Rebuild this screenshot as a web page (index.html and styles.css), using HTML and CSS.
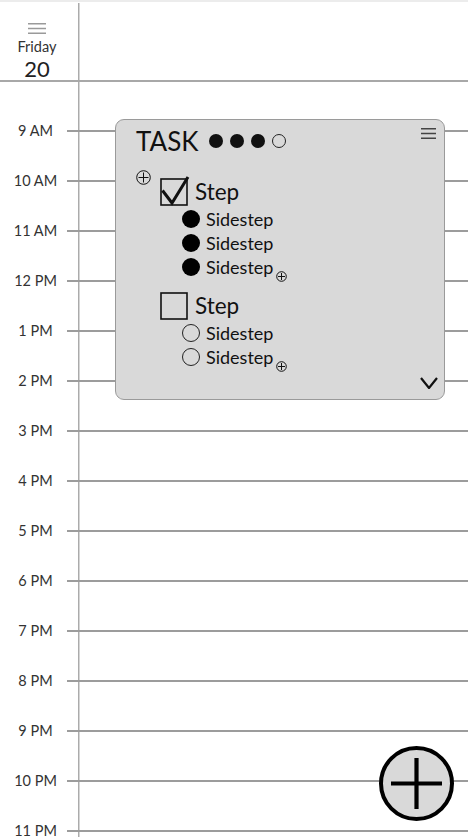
FILE: index.html
```html
<!DOCTYPE html>
<html lang="en">
<head>
<meta charset="utf-8">
<title>Day view</title>
<link rel="stylesheet" href="styles.css">
</head>
<body>
<div class="app">
  <header class="header">
    <div class="day">
      <svg class="day-menu" width="18" height="11" viewBox="0 0 18 11"><path d="M0 0.75H18M0 5.5H18M0 10.25H18" stroke="#9a9a9a" stroke-width="1.5"/></svg>
      <div class="weekday">Friday</div>
      <div class="date">20</div>
    </div>
  </header>
  <div class="timeline">
    <div class="hour"><span class="label">9 AM</span><span class="rule"></span></div>
    <div class="hour"><span class="label">10 AM</span><span class="rule"></span></div>
    <div class="hour"><span class="label">11 AM</span><span class="rule"></span></div>
    <div class="hour"><span class="label">12 PM</span><span class="rule"></span></div>
    <div class="hour"><span class="label">1 PM</span><span class="rule"></span></div>
    <div class="hour"><span class="label">2 PM</span><span class="rule"></span></div>
    <div class="hour"><span class="label">3 PM</span><span class="rule"></span></div>
    <div class="hour"><span class="label">4 PM</span><span class="rule"></span></div>
    <div class="hour"><span class="label">5 PM</span><span class="rule"></span></div>
    <div class="hour"><span class="label">6 PM</span><span class="rule"></span></div>
    <div class="hour"><span class="label">7 PM</span><span class="rule"></span></div>
    <div class="hour"><span class="label">8 PM</span><span class="rule"></span></div>
    <div class="hour"><span class="label">9 PM</span><span class="rule"></span></div>
    <div class="hour"><span class="label">10 PM</span><span class="rule"></span></div>
    <div class="hour"><span class="label">11 PM</span><span class="rule"></span></div>
  </div>

  <div class="task">
    <div class="task-head">
      <span class="task-title">TASK</span>
      <span class="dots">
        <span class="dot"></span><span class="dot"></span><span class="dot"></span><span class="dot empty"></span>
      </span>
      <svg class="task-menu" width="15" height="11" viewBox="0 0 15 11"><path d="M0 0.75H15M0 5.5H15M0 10.25H15" stroke="#444" stroke-width="1.3"/></svg>
    </div>

    <div class="step">
      <svg class="add" width="15" height="15" viewBox="0 0 15 15"><circle cx="7.5" cy="7.5" r="6.8" fill="none" stroke="#111" stroke-width="1"/><path d="M7.5 2.5V12.5M2.5 7.5H12.5" stroke="#111" stroke-width="1"/></svg>
      <svg class="box" width="28" height="28" viewBox="0 0 28 28"><rect x="1" y="1" width="26" height="26" fill="none" stroke="#111" stroke-width="1.6"/><polyline points="2.5,12.5 12,25 28,-1" fill="none" stroke="#111" stroke-width="3"/></svg>
      <span class="step-text">Step</span>
    </div>
    <div class="sides">
      <div class="side"><span class="bullet"></span><span class="side-text">Sidestep</span></div>
      <div class="side"><span class="bullet"></span><span class="side-text">Sidestep</span></div>
      <div class="side"><span class="bullet"></span><span class="side-text">Sidestep</span><svg class="add-sm" width="11" height="11" viewBox="0 0 11 11"><circle cx="5.5" cy="5.5" r="4.8" fill="none" stroke="#111" stroke-width="1"/><path d="M5.5 2V9M2 5.5H9" stroke="#111" stroke-width="1"/></svg></div>
    </div>

    <div class="step step-two">
      <svg class="box" width="28" height="28" viewBox="0 0 28 28"><rect x="1" y="1" width="26" height="26" fill="none" stroke="#111" stroke-width="1.6"/></svg>
      <span class="step-text">Step</span>
    </div>
    <div class="sides">
      <div class="side"><span class="bullet empty"></span><span class="side-text">Sidestep</span></div>
      <div class="side"><span class="bullet empty"></span><span class="side-text">Sidestep</span><svg class="add-sm" width="11" height="11" viewBox="0 0 11 11"><circle cx="5.5" cy="5.5" r="4.8" fill="none" stroke="#111" stroke-width="1"/><path d="M5.5 2V9M2 5.5H9" stroke="#111" stroke-width="1"/></svg></div>
    </div>

    <svg class="chevron" width="18" height="12" viewBox="0 0 18 12"><polyline points="1,1 9,11 17,1" fill="none" stroke="#111" stroke-width="2.2"/></svg>
  </div>

  <button class="fab" type="button" aria-label="Add">
    <svg width="51" height="51" viewBox="0 0 51 51"><path d="M25.5 0V51M0 25.5H51" stroke="#000" stroke-width="4.2"/></svg>
  </button>
</div>
</body>
</html>
```

FILE: styles.css
```css
* { box-sizing: border-box; }
html, body { margin: 0; padding: 0; background: #fff; }
body { font-family: Lato, "Open Sans", sans-serif; color: #222; }

.app {
  position: relative;
  width: 468px;
  height: 837px;
  overflow: hidden;
  border-top: 2px solid #ececec;
  background: linear-gradient(#ababab, #ababab) 78px 1px / 1.5px 100% no-repeat #fff;
}

.header {
  height: 80px;
  border-bottom: 2px solid #a8a8a8;
  display: flex;
}
.day {
  width: 74px;
  display: flex;
  flex-direction: column;
  align-items: center;
  padding-top: 21px;
}
.day-menu { display: block; }
.weekday {
  margin-top: 5px;
  font-size: 14.5px;
  line-height: 16px;
  color: #333;
}
.date {
  margin-top: 3px;
  font-size: 22px;
  line-height: 22px;
  color: #222;
}

.timeline { padding-top: 24px; }
.hour {
  height: 50px;
  display: flex;
  align-items: center;
}
.label {
  width: 67px;
  padding-left: 4px;
  text-align: center;
  font-size: 14.5px;
  line-height: 16px;
  color: #333;
}
.rule {
  flex: 1;
  height: 2px;
  background: #9c9c9c;
}

.task {
  position: absolute;
  left: 115px;
  top: 117px;
  width: 330px;
  height: 281px;
  background: #d9d9d9;
  border: 1px solid #9a9a9a;
  border-radius: 9px;
  padding: 6px 8px 0 20px;
  display: flex;
  flex-direction: column;
}
.task-head {
  height: 30px;
  display: flex;
  align-items: center;
}
.task-title {
  font-size: 26px;
  line-height: 30px;
  color: #111;
}
.dots {
  display: flex;
  gap: 7px;
  margin-left: 11px;
}
.dot {
  width: 14px;
  height: 14px;
  border-radius: 50%;
  background: #111;
}
.dot.empty {
  background: transparent;
  border: 1.3px solid #222;
}
.task-menu {
  margin-left: auto;
  align-self: flex-start;
  margin-top: 2px;
}

.step {
  display: flex;
  align-items: flex-start;
  margin-top: 14px;
}
.add { display: block; flex: none; }
.box { display: block; flex: none; overflow: visible; margin-left: 9px; margin-top: 8px; }
.step-text {
  margin-left: 7px;
  margin-top: 8px;
  font-size: 22.5px;
  line-height: 28px;
  color: #111;
}
.step-two { margin-top: 13px; }
.step-two .box { margin-left: 24px; margin-top: 0; }
.step-two .step-text { margin-top: 0; }

.sides {
  margin-left: 46px;
  margin-top: 1px;
  display: flex;
  flex-direction: column;
}
.side {
  height: 24px;
  display: flex;
  align-items: center;
}
.bullet {
  width: 18px;
  height: 18px;
  border-radius: 50%;
  background: #000;
  flex: none;
}
.bullet.empty {
  background: transparent;
  border: 1.3px solid #222;
}
.side-text {
  margin-left: 6px;
  font-size: 18px;
  line-height: 24px;
  color: #111;
}
.add-sm {
  display: block;
  margin-left: 3px;
  align-self: flex-end;
  margin-bottom: -3px;
}

.chevron {
  align-self: flex-end;
  margin-top: 8px;
  margin-right: -2px;
}

.fab {
  position: absolute;
  left: 379px;
  top: 744px;
  width: 75px;
  height: 75px;
  padding: 0;
  border: 4px solid #000;
  border-radius: 50%;
  background: #d9d9d9;
  display: flex;
  align-items: center;
  justify-content: center;
}
.fab svg { display: block; }
```
